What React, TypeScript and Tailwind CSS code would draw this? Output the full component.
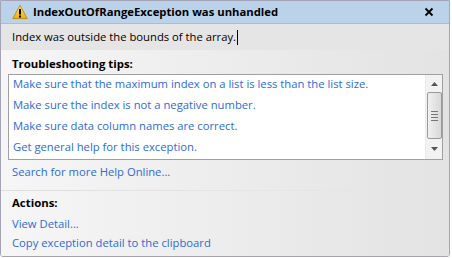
import React from "react";

const font = { fontFamily: '"Open Sans", "Noto Sans", sans-serif' };

function Warn() {
  return (
    <svg width="16" height="16" viewBox="0 0 16 16">
      <defs>
        <linearGradient id="wg" x1="0" y1="0" x2="0" y2="1">
          <stop offset="0" stopColor="#ffe680" />
          <stop offset="1" stopColor="#f0b000" />
        </linearGradient>
      </defs>
      <path d="M8 1.2 L15.2 14.6 H0.8 Z" fill="url(#wg)" stroke="#c08a00" strokeWidth="0.9" strokeLinejoin="round" />
      <rect x="7" y="5" width="2" height="5.5" fill="#000" />
      <rect x="7" y="11.5" width="2" height="2" fill="#000" />
    </svg>
  );
}

export default function App() {
  const tips = [
    "Make sure that the maximum index on a list is less than the list size.",
    "Make sure the index is not a negative number.",
    "Make sure data column names are correct.",
    "Get general help for this exception.",
  ];
  return (
    <div className="w-[452px] h-[258px] bg-white" style={font}>
      <div className="w-[450px] h-[257px] flex flex-col border border-[#a4a4b6] rounded-b-[3px] overflow-hidden">
        <div className="h-[23px] shrink-0 bg-[#bbd2eb] flex items-center pl-[11px] pr-[15px] border-b border-[#a9bdd6]">
          <Warn />
          <span className="ml-[5px] text-[11.3px] font-bold text-black leading-none flex-1">
            IndexOutOfRangeException was unhandled
          </span>
          <svg width="10" height="10" viewBox="0 0 10 10">
            <path d="M1.5 1.5 L8.5 8.5 M8.5 1.5 L1.5 8.5" stroke="#000" strokeWidth="1.8" />
          </svg>
        </div>
        <div className="h-[26px] shrink-0 bg-[#e5e5e5] flex items-center pl-[11px] text-[11.25px] text-black">
          Index was outside the bounds of the array.
          <span className="inline-block w-px h-[15px] bg-black ml-[1px]" />
        </div>
        <div className="flex-1 flex flex-col bg-gradient-to-r from-[#f6f6f6] to-[#e3e3e3]">
          <div className="pl-[11px] pt-[6px] text-[11.4px] font-bold text-black leading-[16px]">
            Troubleshooting tips:
          </div>
          <div className="ml-[7px] mr-[6px] mt-[2px] h-[86px] border border-[#a0a0a0] bg-white flex overflow-hidden">
            <div className="flex-1 flex flex-col pl-[4px] mt-[-1px]">
              {tips.map((t) => (
                <div key={t} className="h-[21px] shrink-0 flex items-center text-[11.25px] text-[#2d6bd4] whitespace-nowrap">
                  {t}
                </div>
              ))}
            </div>
            <div className="w-[17px] flex flex-col items-center bg-[#f2f2f2] border-l border-[#ebebeb]">
              <div className="h-[17px] flex items-center justify-center">
                <svg width="7" height="4" viewBox="0 0 7 4"><path d="M0 4 L3.5 0 L7 4 Z" fill="#555" /></svg>
              </div>
              <div className="w-[15px] h-[47px] rounded-[2px] border border-[#9a9a9a] bg-gradient-to-r from-[#f0f0f0] to-[#d8d8d8] flex flex-col items-center justify-center gap-[2px]">
                <div className="w-[7px] h-px bg-[#777]" />
                <div className="w-[7px] h-px bg-[#777]" />
                <div className="w-[7px] h-px bg-[#777]" />
                <div className="w-[7px] h-px bg-[#777]" />
              </div>
              <div className="flex-1 flex items-center justify-center">
                <svg width="7" height="4" viewBox="0 0 7 4"><path d="M0 0 L7 0 L3.5 4 Z" fill="#555" /></svg>
              </div>
            </div>
          </div>
          <div className="pl-[11px] mt-[2px] h-[20px] flex items-center text-[11.25px] text-[#2d6bd4]">
            Search for more Help Online...
          </div>
          <div className="mt-[8px] h-px w-[430px] bg-gradient-to-r from-[#dcdcdc] to-transparent" />
          <div className="pl-[11px] mt-[4px] text-[11.4px] font-bold text-black leading-[16px]">
            Actions:
          </div>
          <div className="pl-[11px] mt-[4px] h-[19px] flex items-center text-[11.25px] text-[#2d6bd4]">
            View Detail...
          </div>
          <div className="pl-[11px] h-[19px] flex items-center text-[11.25px] text-[#2d6bd4]">
            Copy exception detail to the clipboard
          </div>
        </div>
      </div>
    </div>
  );
}
